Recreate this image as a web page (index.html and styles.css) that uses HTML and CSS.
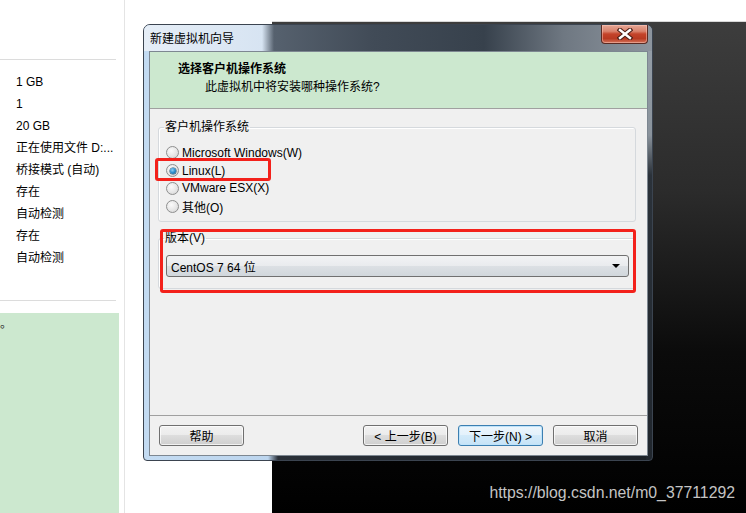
FILE: index.html
```html
<!DOCTYPE html>
<html lang="zh">
<head>
  <meta charset="UTF-8">
  <title>新建虚拟机向导</title>
  <link rel="stylesheet" href="styles.css">
</head>
<body>
  <aside class="side">
    <div class="side-rule"></div>
    <ul class="side-list">
      <li>1 GB</li>
      <li>1</li>
      <li>20 GB</li>
      <li>正在使用文件 D:...</li>
      <li>桥接模式 (自动)</li>
      <li>存在</li>
      <li>自动检测</li>
      <li>存在</li>
      <li>自动检测</li>
    </ul>
    <div class="side-rule side-rule-low"></div>
    <div class="side-note">。</div>
  </aside>

  <div class="backdrop">
    <span class="watermark">https://blog.csdn.net/m0_37711292</span>
  </div>

  <div class="wizard">
    <div class="wizard-title">
      <span>新建虚拟机向导</span>
      <button class="close-btn" aria-label="关闭">
        <svg width="16" height="12" viewBox="0 0 16 12">
          <path d="M3 2 L13 10 M13 2 L3 10" stroke="#4a1d15" stroke-width="4.6" stroke-linecap="square"/>
          <path d="M3 2 L13 10 M13 2 L3 10" stroke="#ffffff" stroke-width="2.4" stroke-linecap="square"/>
        </svg>
      </button>
    </div>

    <div class="wizard-client">
      <div class="wizard-header">
        <h1>选择客户机操作系统</h1>
        <p>此虚拟机中将安装哪种操作系统?</p>
      </div>

      <div class="wizard-body">
        <fieldset class="group os-group">
          <legend>客户机操作系统</legend>
          <div class="radio"><span class="radio-dot"></span>Microsoft Windows(W)</div>
          <div class="radio"><span class="radio-dot checked"></span>Linux(L)</div>
          <div class="radio"><span class="radio-dot"></span>VMware ESX(X)</div>
          <div class="radio"><span class="radio-dot"></span>其他(O)</div>
        </fieldset>

        <fieldset class="group version-group">
          <legend>版本(V)</legend>
          <div class="select">
            <span>CentOS 7 64 位</span>
            <span class="select-arrow"></span>
          </div>
        </fieldset>
      </div>

      <div class="wizard-buttons">
        <button class="btn">帮助</button>
        <div class="btn-spacer"></div>
        <button class="btn">&lt; 上一步(B)</button>
        <button class="btn btn-focus">下一步(N) &gt;</button>
        <button class="btn">取消</button>
      </div>
    </div>

    <div class="mark mark-linux"></div>
    <div class="mark mark-version"></div>
  </div>
</body>
</html>
```

FILE: styles.css
```css
* {
  margin: 0;
  padding: 0;
  box-sizing: border-box;
}

body {
  position: relative;
  width: 746px;
  height: 513px;
  overflow: hidden;
  background: #fff;
  color: #000;
  font-family: "Liberation Sans", "Noto Sans CJK SC", sans-serif;
  font-size: 12px;
}

/* left info panel */
.side {
  width: 125px;
  height: 513px;
  overflow: hidden;
  border-right: 1px solid #e4e4e4;
}

.side-rule {
  width: 116px;
  height: 1px;
  margin-top: 59px;
  background: #dcdcdc;
}

.side-rule-low {
  margin-top: 31px;
}

.side-list {
  list-style: none;
  margin-top: 11px;
  padding-left: 16px;
  line-height: 22px;
  white-space: nowrap;
}

.side-note {
  width: 119px;
  height: 200px;
  margin-top: 12px;
  padding-top: 2px;
  background: #cce8cf;
  line-height: 18px;
  color: #333;
}

/* dark window behind */
.backdrop {
  position: absolute;
  left: 272px;
  top: 21px;
  right: 0;
  bottom: 0;
  border-top: 1px solid #d8d8d8;
  background: linear-gradient(to bottom, #3d3d3d 0, #2b2b2b 170px, #0b0b0b 330px, #000 100%);
}

.watermark {
  position: absolute;
  right: 11px;
  bottom: 12px;
  line-height: 16px;
  font-size: 15.8px;
  color: #c4c4c4;
}

/* wizard dialog */
.wizard {
  position: absolute;
  left: 143px;
  top: 24px;
  width: 510px;
  height: 437px;
  padding: 0 4px 4px 5px;
  border: 1px solid #3b4450;
  border-radius: 7px 7px 4px 4px;
  background:
    linear-gradient(to bottom, #97a0a9 0, #8a939c 110px, #2b323a 150px, #20262d 100%) right top / 6px 100% no-repeat,
    linear-gradient(to right, #c3dbf2 0, #bcd5ee 124px, #2a3038 134px, #1c2127 100%);
}

.wizard-title {
  display: flex;
  align-items: center;
  justify-content: space-between;
  height: 26px;
  margin: 0 -4px 0 -5px;
  padding: 0 4px 0 6px;
  border-radius: 6px 6px 0 0;
  background: linear-gradient(to right, #e6eef7 0, #d7e4f2 118px, #56616e 130px, #414b57 230px, #37414c 340px, #6f7882 420px, #8d959e 100%);
}

.wizard-title span {
  line-height: 14px;
  padding-top: 1px;
}

.close-btn {
  align-self: flex-start;
  display: flex;
  align-items: center;
  justify-content: center;
  width: 47px;
  height: 19px;
  border: 1px solid #5a2a22;
  border-top: none;
  border-radius: 0 0 4px 4px;
  background: linear-gradient(to bottom, #e6a796 0, #d9826c 35%, #c4432a 50%, #b83a22 75%, #d4735a 100%);
  box-shadow: inset 0 0 0 1px rgba(255, 210, 200, 0.45);
}

.wizard-client {
  display: flex;
  flex-direction: column;
  height: 405px;
  border: 1px solid #7d8791;
  background: #f0f0f0;
}

.wizard-header {
  height: 57px;
  padding: 9px 0 0 28px;
  border-bottom: 1px solid #a0a0a0;
  background: #cce8cf;
  line-height: 16px;
}

.wizard-header h1 {
  font-size: 12px;
  font-weight: bold;
}

.wizard-header p {
  margin-top: 2px;
  padding-left: 27px;
}

.wizard-body {
  flex: 1;
  padding: 11px 11px 0 8px;
  border-bottom: 1px solid #a0a0a0;
}

.group {
  padding: 0 6px;
  border: 1px solid #d5d9dd;
  border-radius: 3px;
  box-shadow: inset 1px 1px 0 #fff;
}

.group legend {
  padding: 0 1px;
  margin-left: -1px;
  line-height: 14px;
}

.os-group {
  padding-top: 10px;
  padding-bottom: 6px;
}

.radio {
  display: flex;
  align-items: center;
  gap: 3px;
  height: 17.75px;
  white-space: nowrap;
}

.radio-dot {
  position: relative;
  width: 13px;
  height: 13px;
  margin-left: 1px;
  border: 1px solid #8e8f8f;
  border-radius: 50%;
  background: radial-gradient(circle at 40% 35%, #fbfbfb 0, #e6e6e6 55%, #d0d0d0 100%);
}

.radio-dot.checked::after {
  content: "";
  position: absolute;
  left: 2.5px;
  top: 2.5px;
  width: 6px;
  height: 6px;
  border-radius: 50%;
  background: radial-gradient(circle at 40% 35%, #8fd0f5 0, #2a8ccc 50%, #135983 100%);
  box-shadow: 0 0 0 0.5px #1b4a6a;
}

.version-group {
  margin-top: 9px;
  padding-top: 10px;
  padding-bottom: 11px;
}

.select {
  display: flex;
  align-items: center;
  justify-content: space-between;
  width: 463px;
  height: 22px;
  margin-left: 1px;
  padding: 0 8px 0 4px;
  border: 1px solid #707070;
  border-radius: 3px;
  background: linear-gradient(to bottom, #f2f3f4 0, #e9ebee 50%, #dce0e4 50%, #d1d7dc 100%);
}

.select-arrow {
  width: 0;
  height: 0;
  border-left: 4px solid transparent;
  border-right: 4px solid transparent;
  border-top: 4px solid #000;
}

.wizard-buttons {
  display: flex;
  gap: 10px;
  height: 39px;
  padding: 9px;
}

.btn-spacer {
  flex: 1;
}

.btn {
  width: 85px;
  height: 21px;
  border: 1px solid #707070;
  border-radius: 3px;
  background: linear-gradient(to bottom, #f2f2f2 0, #ebebeb 50%, #dddddd 50%, #cfcfcf 100%);
  box-shadow: inset 0 0 0 1px rgba(255, 255, 255, 0.7);
  font-family: inherit;
  font-size: 12px;
  color: #000;
}

.btn-focus {
  border-color: #3c7fb1;
  background: linear-gradient(to bottom, #edf6fc 0, #e3f1fb 50%, #d3eaf9 50%, #c6e3f7 100%);
  box-shadow: inset 0 0 0 1px #bfe3fa;
}

/* red highlight boxes drawn over the screenshot */
.mark {
  position: absolute;
  border: 3px solid #f3211b;
  border-radius: 3px;
}

.mark-linux {
  left: 11px;
  top: 133px;
  width: 116px;
  height: 23px;
}

.mark-version {
  left: 16px;
  top: 204px;
  width: 476px;
  height: 64px;
}
```
